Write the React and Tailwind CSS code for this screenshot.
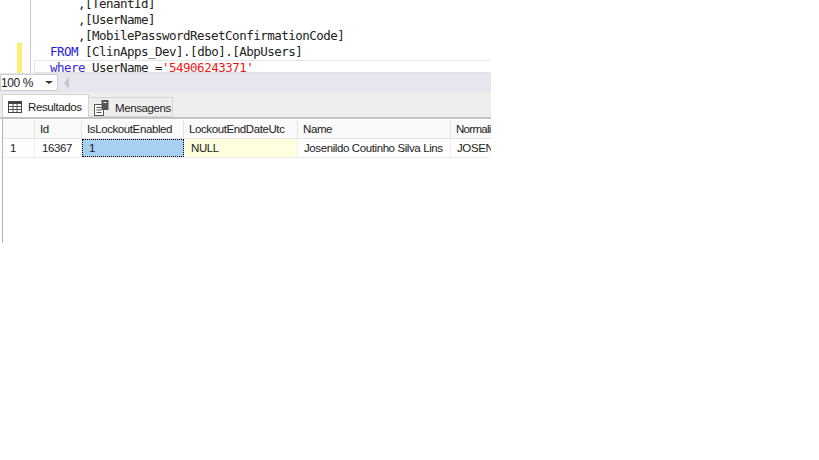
const SQL_FONT = "font-['DejaVu_Sans_Mono','Liberation_Mono',monospace]";
const GRID_FONT = "font-['Liberation_Sans',Arial,sans-serif]";
const GRID_COLS = "grid grid-cols-[32px_47px_102px_114px_153px_1fr]";

function GridIcon() {
  return (
    <svg width="14" height="12" viewBox="0 0 14 12" className="block">
      <rect x="0.5" y="0.5" width="13" height="11" fill="#fff" stroke="#444" />
      <rect x="1" y="1" width="12" height="2" fill="#444" />
      <path d="M5 3v8M9 3v8M1 5.5h12M1 8.5h12" stroke="#555" strokeWidth="1" />
    </svg>
  );
}

function MessagesIcon() {
  return (
    <svg width="15" height="16" viewBox="0 0 15 16" className="block">
      <rect x="0.5" y="4.5" width="9" height="11" fill="#fff" stroke="#555" />
      <path d="M2.5 7.5h5M2.5 10h5M2.5 12.5h5" stroke="#555" />
      <rect x="8" y="0.5" width="6" height="9" fill="#555" stroke="#555" />
      <rect x="9.5" y="2" width="3" height="1" fill="#fff" />
    </svg>
  );
}

function SqlLine({ className = "", children }) {
  return <div className={`h-4 whitespace-pre leading-4 ${className}`}>{children}</div>;
}

function HeaderCell({ className = "", children }) {
  return (
    <div className={`flex h-[18px] items-center overflow-hidden whitespace-nowrap border-r border-[#e4e4e4] pl-[5px] pt-[2px] ${className}`}>
      {children}
    </div>
  );
}

function DataCell({ className = "", children }) {
  return (
    <div className={`flex h-[18px] items-center overflow-hidden whitespace-nowrap border-r border-[#eeeeee] pl-[7px] pt-[2px] ${className}`}>
      {children}
    </div>
  );
}

export default function App() {
  return (
    <div className="h-[460px] w-[819px] overflow-hidden bg-white">
      <div className="w-[491px]">
        {/* editor */}
        <div className="flex h-[73px] overflow-hidden">
          <div className="flex w-[31px] shrink-0 justify-end border-r border-[#c8c8c8] pr-[8px]">
            <div className="mt-[43px] h-[30px] w-[5px] bg-[#fdee6d]" />
          </div>
          <div className={`min-w-0 flex-1 pl-[3px] text-[12.5px] tracking-[-0.52px] text-[#222] ${SQL_FONT}`}>
            <div className="-mt-[4px] pl-[44px]">
              <SqlLine>,[TenantId]</SqlLine>
              <SqlLine>,[UserName]</SqlLine>
              <SqlLine>,[MobilePasswordResetConfirmationCode]</SqlLine>
            </div>
            <SqlLine className="pl-[16px]">
              <span className="text-[#1a1ae0]">FROM</span> [ClinApps_Dev].[dbo].[AbpUsers]
            </SqlLine>
            <SqlLine className="!h-[13px] border border-r-0 border-[#e4e4e4] pl-[15px] !leading-[13px]">
              <span className="text-[#3a2ae0]">where</span> UserName =<span className="text-[#f01818]">'54906243371'</span>
            </SqlLine>
          </div>
        </div>

        {/* zoom bar */}
        <div className="flex h-[19px] items-center bg-[#e6e7ee]">
          <div className={`flex h-[17px] w-[58px] items-center justify-between border border-[#d0d0d4] bg-white pr-[4px] text-[12px] tracking-[-0.4px] text-[#222] ${GRID_FONT}`}>
            <span>100 %</span>
            <span className="h-0 w-0 border-x-[4px] border-t-[3px] border-x-transparent border-t-[#333]" />
          </div>
          <span className="ml-[6px] h-0 w-0 border-y-[6px] border-r-[5px] border-y-transparent border-r-[#c4c6cc]" />
        </div>

        {/* tabs */}
        <div className={`flex h-[27px] items-end border-b-2 border-[#c4c4c4] bg-[#eeeeee] pl-[2px] text-[11.5px] tracking-[-0.4px] text-[#222] ${GRID_FONT}`}>
          <div className="flex h-[23px] w-[87px] items-center gap-[6px] border-x border-t border-[#d4d4d4] bg-white pl-[5px] pt-[2px]">
            <GridIcon />
            <span className="pt-[2px]">Resultados</span>
          </div>
          <div className="flex h-[20px] w-[84px] items-center gap-[6px] border-y border-r border-[#d4d4d4] pl-[5px] pt-[2px]">
            <MessagesIcon />
            <span className="pt-[2px]">Mensagens</span>
          </div>
        </div>

        {/* results grid */}
        <div className={`ml-[2px] h-[124px] border-l border-[#b0b0b8] pt-[1px] text-[11.5px] tracking-[-0.4px] text-[#222] ${GRID_FONT}`}>
          <div className={`${GRID_COLS} border-b border-[#e4e4e4] bg-[#fafafa]`}>
            <HeaderCell />
            <HeaderCell>Id</HeaderCell>
            <HeaderCell>IsLockoutEnabled</HeaderCell>
            <HeaderCell>LockoutEndDateUtc</HeaderCell>
            <HeaderCell>Name</HeaderCell>
            <HeaderCell className="border-r-0 tracking-[-0.7px]">Normali</HeaderCell>
          </div>
          <div className={`${GRID_COLS} border-b border-[#eeeeee]`}>
            <DataCell>1</DataCell>
            <DataCell>16367</DataCell>
            <DataCell className="border border-dotted border-black bg-[#a6cff1] !pl-[6px]">1</DataCell>
            <DataCell className="bg-[#ffffe0]">NULL</DataCell>
            <DataCell className="!pl-[6px]">Josenildo Coutinho Silva Lins</DataCell>
            <DataCell className="border-r-0 !pl-[6px]">JOSEN</DataCell>
          </div>
        </div>
      </div>
    </div>
  );
}
